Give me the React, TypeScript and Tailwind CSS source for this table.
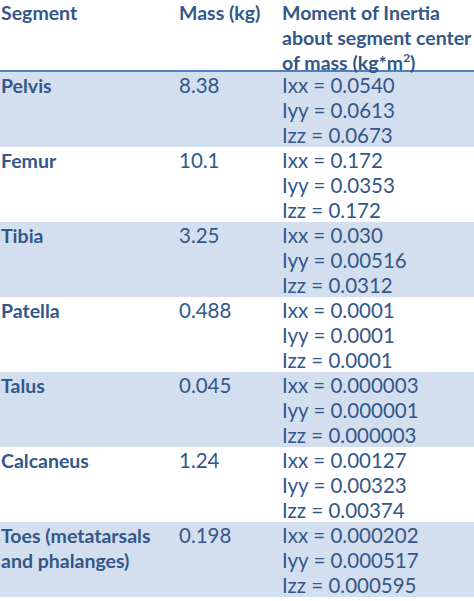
import React from "react";

type Row = { seg: string[]; mass: string; moi: string[] };

const rows: Row[] = [
  { seg: ["Pelvis"], mass: "8.38", moi: ["Ixx = 0.0540", "Iyy = 0.0613", "Izz = 0.0673"] },
  { seg: ["Femur"], mass: "10.1", moi: ["Ixx = 0.172", "Iyy = 0.0353", "Izz = 0.172"] },
  { seg: ["Tibia"], mass: "3.25", moi: ["Ixx = 0.030", "Iyy = 0.00516", "Izz = 0.0312"] },
  { seg: ["Patella"], mass: "0.488", moi: ["Ixx = 0.0001", "Iyy = 0.0001", "Izz = 0.0001"] },
  { seg: ["Talus"], mass: "0.045", moi: ["Ixx = 0.000003", "Iyy = 0.000001", "Izz = 0.000003"] },
  { seg: ["Calcaneus"], mass: "1.24", moi: ["Ixx = 0.00127", "Iyy = 0.00323", "Izz = 0.00374"] },
  { seg: ["Toes (metatarsals", "and phalanges)"], mass: "0.198", moi: ["Ixx = 0.000202", "Iyy = 0.000517", "Izz = 0.000595"] },
];

export default function App() {
  return (
    <div
      className="w-[474px] h-[601px] bg-white text-[#33578a] text-[20.5px] leading-[25px] overflow-hidden"
      style={{ fontFamily: "Lato, 'Open Sans', sans-serif" }}
    >
      <div className="grid grid-cols-[178px_103px_1fr] h-[72px] font-bold text-[19.5px] border-b-2 border-[#4f81bd] pl-[1px] pt-[0px]">
        <div>Segment</div>
        <div>Mass (kg)</div>
        <div>
          <div>Moment of Inertia</div>
          <div>about segment center</div>
          <div className="h-[20px]">
            of mass (kg*m<span className="relative -top-[8px] text-[12px] leading-none">2</span>)
          </div>
        </div>
      </div>
      {rows.map((r, i) => (
        <div
          key={i}
          className={`grid grid-cols-[178px_103px_1fr] h-[75px] pl-[1px] pt-[1px] ${i % 2 === 0 ? "bg-[#d3dfee]" : "bg-white"}`}
        >
          <div className="font-bold text-[19.5px]">
            {r.seg.map((s, j) => (
              <div key={j}>{s}</div>
            ))}
          </div>
          <div>{r.mass}</div>
          <div>
            {r.moi.map((m, j) => (
              <div key={j}>{m}</div>
            ))}
          </div>
        </div>
      ))}
    </div>
  );
}
